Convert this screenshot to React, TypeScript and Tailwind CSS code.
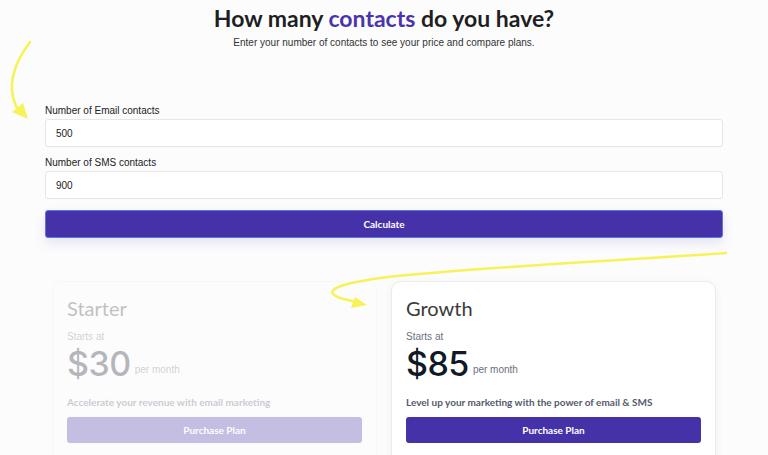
import React from 'react';

const heading = { fontFamily: 'Lato, "Noto Sans", sans-serif' };

export default function App() {
  return (
    <div className="relative w-[768px] h-[455px] overflow-hidden bg-[#fcfcfd] font-['Liberation_Sans',Arial,sans-serif] text-[#222]">
      {/* Header */}
      <div className="flex flex-col items-center pt-[2px]">
        <h1 style={heading} className="text-[23px] leading-[32px] font-bold text-[#1f1f1f]">
          How many <span className="text-[#4a34ad]">contacts</span> do you have?
        </h1>
        <p className="mt-[1px] text-[10px] leading-[16px] text-[#333]">
          Enter your number of contacts to see your price and compare plans.
        </p>
      </div>

      {/* Form */}
      <div className="mx-[45px] mt-[53px] flex flex-col">
        <label className="text-[10px] leading-[14px] text-[#222]">Number of Email contacts</label>
        <div className="mt-[1px] h-[28px] rounded-[3px] border border-[#e6e6e8] bg-white px-[10px] flex items-center text-[10px] text-[#222]">
          500
        </div>
        <label className="mt-[9px] text-[10px] leading-[14px] text-[#222]">Number of SMS contacts</label>
        <div className="mt-[1px] h-[28px] rounded-[3px] border border-[#e6e6e8] bg-white px-[10px] flex items-center text-[10px] text-[#222]">
          900
        </div>
        <button style={heading} className="mt-[11px] h-[28px] rounded-[3px] border border-[#5b78e0] bg-[#4532a8] text-white text-[10px] font-bold shadow-[0_5px_12px_rgba(69,50,168,0.12)]">
          Calculate
        </button>
      </div>

      {/* Plans */}
      <div className="mx-[52px] mt-[43px] grid grid-cols-2 gap-[14px]">
        <div className="opacity-30">
          <PlanCard
            name="Starter"
            price="$30"
            desc="Accelerate your revenue with email marketing"
            faded
          />
        </div>
        <PlanCard
          name="Growth"
          price="$85"
          desc="Level up your marketing with the power of email & SMS"
        />
      </div>

      {/* Hand-drawn arrows */}
      <svg className="absolute left-0 top-0 pointer-events-none" width="768" height="455" viewBox="0 0 768 455" fill="none">
        <path d="M30 42 C 15 62, 6 84, 16 106 L 20 112" stroke="#f7f257" strokeWidth="2.6" strokeLinecap="round" />
        <path d="M28 119 L 12 112 L 23 103 Z" fill="#f7f257" />
        <path d="M726 253 C 600 262, 460 268, 380 278 C 350 282, 328 288, 333 294 C 337 299, 350 300, 356 302" stroke="#f7f257" strokeWidth="2.6" strokeLinecap="round" />
        <path d="M367 305 L 351 308 L 355 297 Z" fill="#f7f257" />
      </svg>
    </div>
  );
}

function PlanCard({ name, price, desc, faded }: { name: string; price: string; desc: string; faded?: boolean }) {
  return (
    <div className={`h-[190px] rounded-[10px] border border-[#ececee] bg-white px-[14px] pt-[14px] ${faded ? '' : 'shadow-[0_2px_10px_rgba(0,0,0,0.05)]'}`}>
      <div style={heading} className="text-[20px] leading-[24px] text-[#3a3a3a]">{name}</div>
      <div className="mt-[10px] text-[10px] leading-[14px] text-[#6b6f80]">Starts at</div>
      <div className="flex items-end">
        <span className="font-['Inter',sans-serif] text-[34px] leading-[40px] font-medium text-[#121826] tracking-[-0.5px]">{price}</span>
        <span className="ml-[4px] mb-[7px] text-[10px] leading-[14px] text-[#6b6f80]">per month</span>
      </div>
      <div style={heading} className="mt-[11px] text-[10px] leading-[14px] font-bold text-[#555a6b]">{desc}</div>
      <button style={heading} className="mt-[8px] w-full h-[26px] rounded-[3px] bg-[#4532a8] text-white text-[10px] font-bold">
        Purchase Plan
      </button>
    </div>
  );
}
